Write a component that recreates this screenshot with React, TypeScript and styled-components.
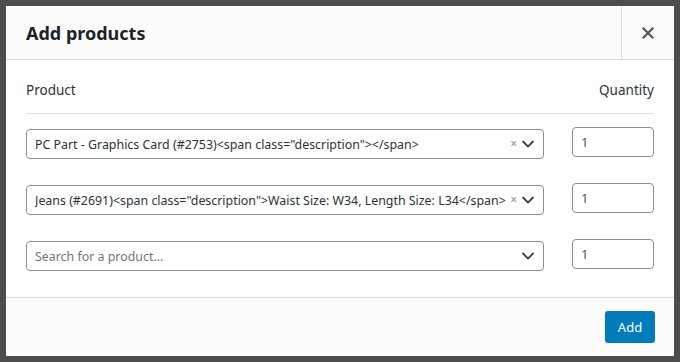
import React from "react";
import styled, { createGlobalStyle } from "styled-components";

const Global = createGlobalStyle`
  html, body { margin: 0; padding: 0; }
  body {
    background: #4d4d4d;
    font-family: "Noto Sans", "Open Sans", sans-serif;
    color: #2c3338;
  }
  * { box-sizing: border-box; }
`;

const Backdrop = styled.div`
  width: 680px;
  height: 362px;
  padding: 6px;
`;

const Dialog = styled.div`
  width: 668px;
  height: 350px;
  background: #fff;
  display: flex;
  flex-direction: column;
`;

const Header = styled.header`
  height: 54px;
  flex: none;
  display: flex;
  align-items: stretch;
  background: #fcfcfc;
  border-bottom: 1px solid #dcdcde;
`;

const Title = styled.h1`
  flex: 1;
  margin: 0;
  padding: 0 20px;
  display: flex;
  align-items: center;
  font-size: 18px;
  font-weight: 700;
  color: #1d2327;
`;

const CloseButton = styled.button`
  width: 53px;
  border: 0;
  border-left: 1px solid #dcdcde;
  background: transparent;
  display: flex;
  align-items: center;
  justify-content: center;
  padding: 0;
  color: #50575e;
`;

const Body = styled.div`
  flex: 1;
  padding: 20px 20px 0 20px;
`;

const HeadRow = styled.div`
  display: flex;
  justify-content: space-between;
  height: 34px;
  border-bottom: 1px solid #dcdcde;
  font-size: 13.5px;
  line-height: 20px;
  color: #2c3338;
`;

const Row = styled.div`
  display: flex;
  align-items: flex-start;
  gap: 28px;
  padding: 13px 0 11px;
`;

const Select = styled.div`
  flex: 1;
  min-width: 0;
  height: 30px;
  margin-top: 2px;
  border: 1px solid #8c8f94;
  border-radius: 4px;
  display: flex;
  align-items: center;
  padding: 0 8px;
  font-size: 12.4px;
`;

const SelectText = styled.span<{ $placeholder?: boolean }>`
  flex: 1;
  min-width: 0;
  white-space: nowrap;
  overflow: hidden;
  color: ${(p) => (p.$placeholder ? "#757575" : "#2c3338")};
`;

const Clear = styled.span`
  flex: none;
  font-size: 12px;
  color: #8c8f94;
  margin: 0 4px 0 1px;
  line-height: 1;
`;

const Chevron = styled.svg`
  flex: none;
  width: 14px;
  height: 14px;
`;

const Qty = styled.div`
  width: 82px;
  flex: none;
  height: 30px;
  border: 1px solid #8c8f94;
  border-radius: 4px;
  padding: 0 8px;
  display: flex;
  align-items: center;
  font-size: 13px;
  color: #50575e;
`;

const Footer = styled.footer`
  height: 59px;
  flex: none;
  background: #fcfcfc;
  border-top: 1px solid #dcdcde;
  box-shadow: 0 -1px 2px rgba(0, 0, 0, 0.04);
  display: flex;
  align-items: center;
  justify-content: flex-end;
  padding: 0 19px 1px 0;
`;

const AddButton = styled.button`
  width: 50px;
  height: 32px;
  background: #007cba;
  border: 0;
  border-radius: 3px;
  color: #fff;
  font-family: inherit;
  font-size: 13px;
  padding: 0;
`;

const ChevronIcon = () => (
  <Chevron viewBox="0 0 14 14">
    <path d="M2 4.5 L7 9.5 L12 4.5" fill="none" stroke="#3c434a" strokeWidth="1.8" strokeLinecap="round" strokeLinejoin="round" />
  </Chevron>
);

const rows = [
  { text: 'PC Part - Graphics Card (#2753)<span class="description"></span>', clear: true },
  { text: 'Jeans (#2691)<span class="description">Waist Size: W34, Length Size: L34</span>', clear: true },
  { text: "Search for a product…", clear: false, placeholder: true },
];

export default function App() {
  return (
    <>
      <Global />
      <Backdrop>
        <Dialog>
          <Header>
            <Title>Add products</Title>
            <CloseButton aria-label="Close">
              <svg width="12" height="12" viewBox="0 0 12 12">
                <path d="M1.5 1.5 L10.5 10.5 M10.5 1.5 L1.5 10.5" stroke="#50575e" strokeWidth="2.2" strokeLinecap="square" />
              </svg>
            </CloseButton>
          </Header>
          <Body>
            <HeadRow>
              <span>Product</span>
              <span>Quantity</span>
            </HeadRow>
            {rows.map((r, i) => (
              <Row key={i}>
                <Select>
                  <SelectText $placeholder={r.placeholder}>{r.text}</SelectText>
                  {r.clear && <Clear>×</Clear>}
                  <ChevronIcon />
                </Select>
                <Qty>1</Qty>
              </Row>
            ))}
          </Body>
          <Footer>
            <AddButton>Add</AddButton>
          </Footer>
        </Dialog>
      </Backdrop>
    </>
  );
}
